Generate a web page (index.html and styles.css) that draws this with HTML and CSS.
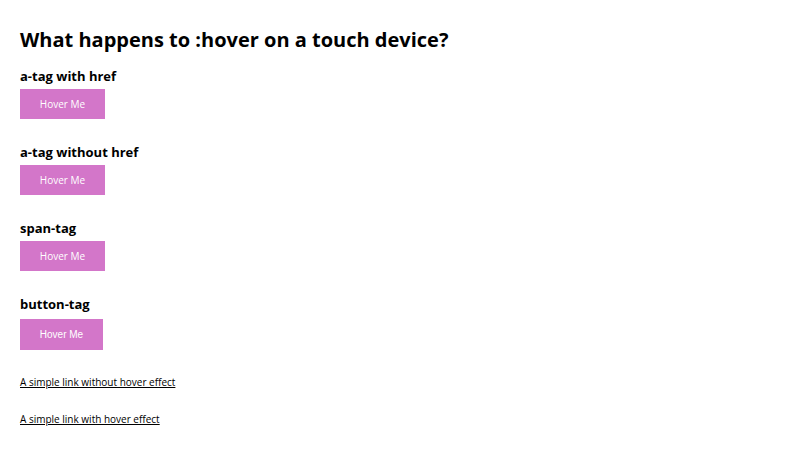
FILE: index.html
```html
<!DOCTYPE html>
<html>
  <head>
    <title>Hover on touch</title>
    <link rel="stylesheet" href="styles.css">
  </head>
  <body>
    <h1 class="page-title">What happens to :hover on a touch device?</h1>

    <div class="demo">
      <h3 class="demo-label">a-tag with href</h3>
      <a class="hover-box" href="#">Hover Me</a>
    </div>

    <div class="demo">
      <h3 class="demo-label">a-tag without href</h3>
      <a class="hover-box">Hover Me</a>
    </div>

    <div class="demo">
      <h3 class="demo-label">span-tag</h3>
      <span class="hover-box">Hover Me</span>
    </div>

    <div class="demo">
      <h3 class="demo-label">button-tag</h3>
      <button class="hover-box hover-button">Hover Me</button>
    </div>

    <p class="plain-link"><a href="#">A simple link without hover effect</a></p>
    <p class="plain-link"><a class="fancy-link" href="#">A simple link with hover effect</a></p>
  </body>
</html>
```

FILE: styles.css
```css
* {
  margin: 0;
  padding: 0;
  box-sizing: border-box;
}

body {
  font-family: "Open Sans", sans-serif;
  color: #000;
  background-color: #fff;
  padding: 26px 20px 0;
}

.page-title {
  font-size: 20px;
  line-height: 28px;
  font-weight: 700;
  margin-bottom: 13px;
}

.demo {
  display: flex;
  flex-direction: column;
  align-items: flex-start;
  margin-bottom: 24px;
}

.demo-label {
  font-size: 13px;
  line-height: 18px;
  font-weight: 700;
  margin-bottom: 4px;
}

.hover-box {
  display: block;
  width: 85px;
  height: 30px;
  line-height: 30px;
  text-align: center;
  font-size: 10px;
  color: #fff;
  background-color: #d376c9;
  text-decoration: none;
  border: none;
}

.hover-box:hover {
  background-color: #b04fa6;
}

/* buttons keep the UA font */
.hover-button {
  font-family: "Liberation Sans", Arial, sans-serif;
  font-size: 10px;
  width: 83px;
  height: 31px;
  line-height: 31px;
  padding: 0;
  margin-top: 2px;
}

.plain-link {
  font-size: 10px;
  line-height: 16px;
  margin-bottom: 21px;
}

.plain-link:last-child {
  margin-bottom: 0;
}

.plain-link a {
  color: #000;
}

.fancy-link:hover {
  color: #d376c9;
}
```
